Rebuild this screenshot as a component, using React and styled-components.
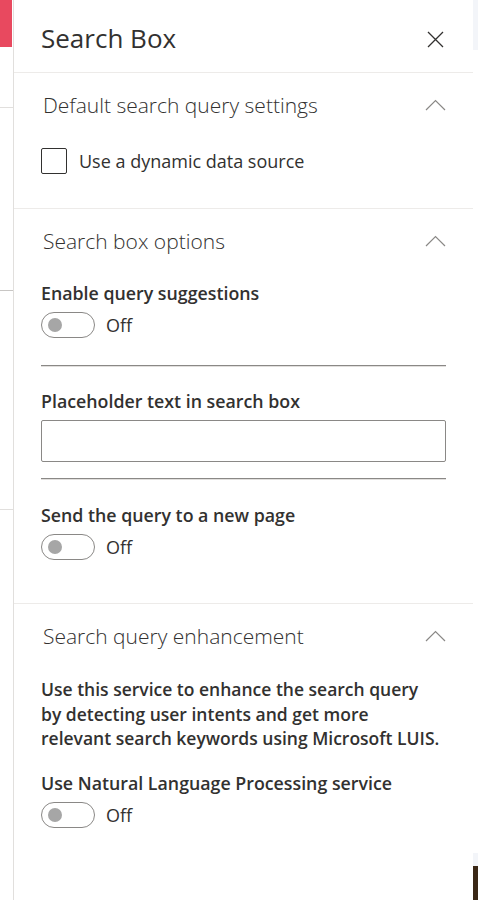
import React from 'react';
import styled, { createGlobalStyle } from 'styled-components';

const GlobalStyle = createGlobalStyle`
  html, body {
    margin: 0;
    padding: 0;
    background: #ffffff;
  }
  body {
    font-family: "Open Sans", "Noto Sans", sans-serif;
    color: #323130;
  }
`;

const Page = styled.div`
  display: flex;
  width: 478px;
  height: 900px;
  overflow: hidden;
`;

const BackStrip = styled.div`
  width: 13px;
  flex: none;
  display: flex;
  flex-direction: column;
`;

const StripBlock = styled.div`
  height: ${(p) => p.$h}px;
  flex: none;
  background: ${(p) => p.$bg || 'transparent'};
  border-bottom: ${(p) => (p.$line ? `1px solid ${p.$line}` : 'none')};
  width: ${(p) => p.$w || 13}px;
`;

const EdgeStrip = styled.div`
  width: 5px;
  flex: none;
  display: flex;
  flex-direction: column;
`;

const Panel = styled.aside`
  flex: 1;
  border-left: 1px solid #e1dfdd;
  background: #ffffff;
  display: flex;
  flex-direction: column;
`;

const Header = styled.header`
  height: 72px;
  border-bottom: 1px solid #edebe9;
  display: flex;
  align-items: center;
  justify-content: space-between;
  padding: 0 29px 0 27px;
`;

const Title = styled.h1`
  margin: 0;
  font-size: 26px;
  font-weight: 500;
  color: #323130;
  padding-top: 4px;
`;

const IconButton = styled.button`
  border: none;
  background: transparent;
  padding: 0;
  display: flex;
  cursor: pointer;
  color: #323130;
  margin-top: 6px;
`;

const Section = styled.section`
  padding: 0 27px ${(p) => p.$pb}px;
  border-bottom: ${(p) => (p.$last ? 'none' : '1px solid #edebe9')};
`;

const GroupHeader = styled.div`
  height: 64px;
  display: flex;
  align-items: center;
  justify-content: space-between;
  padding-left: 2px;
`;

const GroupTitle = styled.h2`
  margin: 0;
  font-size: 21px;
  line-height: 28px;
  font-weight: 300;
  color: #323130;
`;

const CheckRow = styled.label`
  display: flex;
  align-items: center;
  gap: 12px;
  margin-top: ${(p) => p.$mt}px;
  font-size: 18px;
  color: #323130;
`;

const Box = styled.span`
  width: 24px;
  height: 24px;
  border: 1px solid #323130;
  border-radius: 2px;
`;

const FieldLabel = styled.div`
  margin-top: ${(p) => p.$mt}px;
  font-size: 17.8px;
  line-height: 26px;
  font-weight: 600;
  color: #323130;
`;

const ToggleRow = styled.div`
  display: flex;
  align-items: center;
  gap: 11px;
  margin-top: ${(p) => p.$mt}px;
`;

const Track = styled.span`
  width: 46px;
  height: 24px;
  border: 1px solid #8a8886;
  border-radius: 13px;
  display: flex;
  align-items: center;
  padding-left: 6px;
  box-sizing: content-box;
`;

const Knob = styled.span`
  width: 14px;
  height: 14px;
  border-radius: 50%;
  background: #a6a6a6;
`;

const ToggleText = styled.span`
  font-size: 18px;
  color: #323130;
`;

const Rule = styled.hr`
  margin: ${(p) => p.$mt}px 0 0;
  border: none;
  border-top: 1px solid #8a8886;
  border-bottom: 1px solid #e1dfdd;
  height: 0;
`;

const TextInput = styled.input`
  display: block;
  margin-top: ${(p) => p.$mt}px;
  width: 100%;
  height: 42px;
  box-sizing: border-box;
  border: 1px solid #8a8886;
  border-radius: 2px;
  font-family: inherit;
  font-size: 16px;
  padding: 0 8px;
  outline: none;
`;

const Description = styled.p`
  margin: ${(p) => p.$mt}px 0 0;
  font-size: 17.5px;
  line-height: 24.5px;
  font-weight: 600;
  color: #323130;
  white-space: nowrap;
`;

const Chevron = () => (
  <svg width="21" height="12" viewBox="0 0 21 12" fill="none">
    <path d="M1 11 L10.5 1.5 L20 11" stroke="#8a8886" strokeWidth="1.2" />
  </svg>
);

const CloseIcon = () => (
  <svg width="17" height="17" viewBox="0 0 17 17" fill="none">
    <path d="M1 1 L16 16 M16 1 L1 16" stroke="#323130" strokeWidth="1.3" />
  </svg>
);

const Toggle = ({ mt }) => (
  <ToggleRow $mt={mt}>
    <Track>
      <Knob />
    </Track>
    <ToggleText>Off</ToggleText>
  </ToggleRow>
);

const App = () => {
  return (
    <>
      <GlobalStyle />
      <Page>
        {/* page behind the panel */}
        <BackStrip>
          <StripBlock $h={47} $bg="#e8495f" $w={12} />
          <StripBlock $h={60} $line="#e1dfdd" />
          <StripBlock $h={182} $line="#c8c6c4" />
          <StripBlock $h={218} $line="#e1dfdd" />
        </BackStrip>

        <Panel>
          <Header>
            <Title>Search Box</Title>
            <IconButton type="button" aria-label="Close">
              <CloseIcon />
            </IconButton>
          </Header>

          <Section $pb={34}>
            <GroupHeader>
              <GroupTitle>Default search query settings</GroupTitle>
              <Chevron />
            </GroupHeader>
            <CheckRow $mt={11}>
              <Box />
              Use a dynamic data source
            </CheckRow>
          </Section>

          <Section $pb={43}>
            <GroupHeader>
              <GroupTitle>Search box options</GroupTitle>
              <Chevron />
            </GroupHeader>
            <FieldLabel $mt={7}>Enable query suggestions</FieldLabel>
            <Toggle mt={6} />
            <Rule $mt={27} />
            <FieldLabel $mt={21}>Placeholder text in search box</FieldLabel>
            <TextInput $mt={6} />
            <Rule $mt={16} />
            <FieldLabel $mt={22}>Send the query to a new page</FieldLabel>
            <Toggle mt={6} />
          </Section>

          <Section $pb={0} $last>
            <GroupHeader>
              <GroupTitle>Search query enhancement</GroupTitle>
              <Chevron />
            </GroupHeader>
            <Description $mt={9}>
              Use this service to enhance the search query
              <br />
              by detecting user intents and get more
              <br />
              relevant search keywords using Microsoft LUIS.
            </Description>
            <FieldLabel $mt={19}>Use Natural Language Processing service</FieldLabel>
            <Toggle mt={6} />
          </Section>
        </Panel>

        <EdgeStrip>
          <StripBlock $h={50} $bg="#f3f5f9" $w={5} />
          <StripBlock $h={803} $w={5} />
          <StripBlock $h={13} $bg="#f3f5f9" $w={5} />
          <StripBlock $h={34} $bg="#3b2816" $w={5} />
        </EdgeStrip>
      </Page>
    </>
  );
};

export default App;
